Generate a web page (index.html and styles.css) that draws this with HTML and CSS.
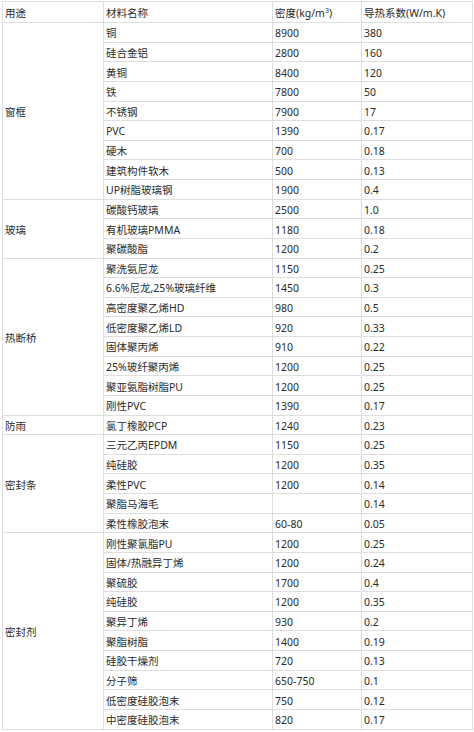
FILE: index.html
```html
<!DOCTYPE html>
<html lang="zh-CN">
<head>
<meta charset="utf-8">
<title>材料导热系数</title>
<link rel="stylesheet" href="styles.css">
</head>
<body>
<table class="tbl">
  <colgroup>
    <col class="c1"><col class="c2"><col class="c3"><col class="c4">
  </colgroup>
  <thead>
    <tr class="hd"><td>用途</td><td>材料名称</td><td>密度(kg/m<sup>3</sup>)</td><td>导热系数(W/m.K)</td></tr>
  </thead>
  <tbody>
    <tr><td rowspan="9" class="grp">窗框</td><td>铜</td><td>8900</td><td>380</td></tr>
    <tr><td>硅合金铝</td><td>2800</td><td>160</td></tr>
    <tr><td>黄铜</td><td>8400</td><td>120</td></tr>
    <tr><td>铁</td><td>7800</td><td>50</td></tr>
    <tr><td>不锈钢</td><td>7900</td><td>17</td></tr>
    <tr><td>PVC</td><td>1390</td><td>0.17</td></tr>
    <tr><td>硬木</td><td>700</td><td>0.18</td></tr>
    <tr><td>建筑构件软木</td><td>500</td><td>0.13</td></tr>
    <tr><td>UP树脂玻璃钢</td><td>1900</td><td>0.4</td></tr>
    <tr><td rowspan="3" class="grp">玻璃</td><td>碳酸钙玻璃</td><td>2500</td><td>1.0</td></tr>
    <tr><td>有机玻璃PMMA</td><td>1180</td><td>0.18</td></tr>
    <tr><td>聚碳酸脂</td><td>1200</td><td>0.2</td></tr>
    <tr><td rowspan="8" class="grp">热断桥</td><td>聚洗氨尼龙</td><td>1150</td><td>0.25</td></tr>
    <tr><td>6.6%尼龙,25%玻璃纤维</td><td>1450</td><td>0.3</td></tr>
    <tr><td>高密度聚乙烯HD</td><td>980</td><td>0.5</td></tr>
    <tr><td>低密度聚乙烯LD</td><td>920</td><td>0.33</td></tr>
    <tr><td>固体聚丙烯</td><td>910</td><td>0.22</td></tr>
    <tr><td>25%玻纤聚丙烯</td><td>1200</td><td>0.25</td></tr>
    <tr><td>聚亚氨脂树脂PU</td><td>1200</td><td>0.25</td></tr>
    <tr><td>刚性PVC</td><td>1390</td><td>0.17</td></tr>
    <tr><td class="grp">防雨</td><td>氯丁橡胶PCP</td><td>1240</td><td>0.23</td></tr>
    <tr><td rowspan="5" class="grp">密封条</td><td>三元乙丙EPDM</td><td>1150</td><td>0.25</td></tr>
    <tr><td>纯硅胶</td><td>1200</td><td>0.35</td></tr>
    <tr><td>柔性PVC</td><td>1200</td><td>0.14</td></tr>
    <tr><td>聚脂马海毛</td><td></td><td>0.14</td></tr>
    <tr><td>柔性橡胶泡末</td><td>60-80</td><td>0.05</td></tr>
    <tr><td rowspan="10" class="grp">密封剂</td><td>刚性聚氯脂PU</td><td>1200</td><td>0.25</td></tr>
    <tr><td>固体/热融异丁烯</td><td>1200</td><td>0.24</td></tr>
    <tr><td>聚硫胶</td><td>1700</td><td>0.4</td></tr>
    <tr><td>纯硅胶</td><td>1200</td><td>0.35</td></tr>
    <tr><td>聚异丁烯</td><td>930</td><td>0.2</td></tr>
    <tr><td>聚脂树脂</td><td>1400</td><td>0.19</td></tr>
    <tr><td>硅胶干燥剂</td><td>720</td><td>0.13</td></tr>
    <tr><td>分子筛</td><td>650-750</td><td>0.1</td></tr>
    <tr><td>低密度硅胶泡末</td><td>750</td><td>0.12</td></tr>
    <tr><td>中密度硅胶泡末</td><td>820</td><td>0.17</td></tr>
  </tbody>
</table>
</body>
</html>
```
FILE: styles.css
```css
html, body {
  margin: 0;
  padding: 0;
  background: #ffffff;
}
body {
  padding: 1px 0 0 2px;
  font-family: "Noto Sans", "Noto Sans CJK SC", sans-serif;
  font-size: 10.5px;
  color: #2b2b2b;
}
.tbl {
  border-collapse: collapse;
  table-layout: fixed;
  width: 470px;
}
.c1 { width: 101px; }
.c2 { width: 169px; }
.c3 { width: 89px; }
.c4 { width: 111px; }
.tbl td {
  border: 1px solid #dedede;
  padding: 2px 2px 0 2px;
  height: 19.64px;
  line-height: 14px;
  white-space: nowrap;
  vertical-align: middle;
  box-sizing: border-box;
}
.tbl .hd td {
  height: 21px;
  padding-top: 1px;
}
.tbl td.grp {
  vertical-align: middle;
}
sup {
  font-size: 7px;
  line-height: 0;
  vertical-align: 4px;
}
```
